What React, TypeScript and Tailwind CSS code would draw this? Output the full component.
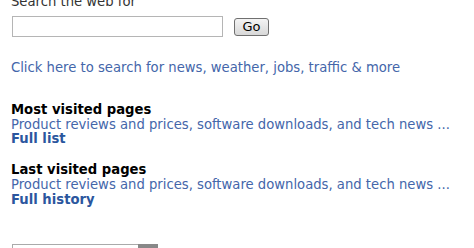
export default function App() {
  return (
    <div className="h-[248px] w-[474px] overflow-hidden bg-white pl-[11px] font-['Verdana','DejaVu_Sans',sans-serif] text-[13.2px] leading-[15px] text-black">
      <div className="-mt-[6px] h-[15px] text-[#333]">Search the web for</div>

      {/* search box */}
      <div className="mt-[7px] flex items-center">
        <div className="ml-px h-[21px] w-[211px] border border-[#b5b5b5] bg-white" />
        <button className="ml-[11px] flex h-[18px] w-[35px] items-center justify-center rounded-[3px] border border-[#707070] bg-gradient-to-b from-[#f4f4f4] to-[#d8d8d8] text-[13px] leading-none text-black">
          Go
        </button>
      </div>

      <a className="mt-[23px] block text-[#4466aa]">
        Click here to search for news, weather, jobs, traffic &amp; more
      </a>

      {/* most visited */}
      <div className="mt-[28px] leading-[14.7px]">
        <div className="font-bold">Most visited pages</div>
        <div className="text-[#4466aa]">Product reviews and prices, software downloads, and tech news ...</div>
        <div className="font-bold text-[#2b569e]">Full list</div>
      </div>

      {/* last visited */}
      <div className="mt-[16px] leading-[14.7px]">
        <div className="font-bold">Last visited pages</div>
        <div className="text-[#4466aa]">Product reviews and prices, software downloads, and tech news ...</div>
        <div className="font-bold text-[#2b569e]">Full history</div>
      </div>

      <div className="mt-[37px] ml-px flex">
        <div className="h-[8px] w-[126px] border-l border-t border-[#aaa]" />
        <div className="h-[8px] w-[20px] bg-[#888]" />
      </div>
    </div>
  );
}
